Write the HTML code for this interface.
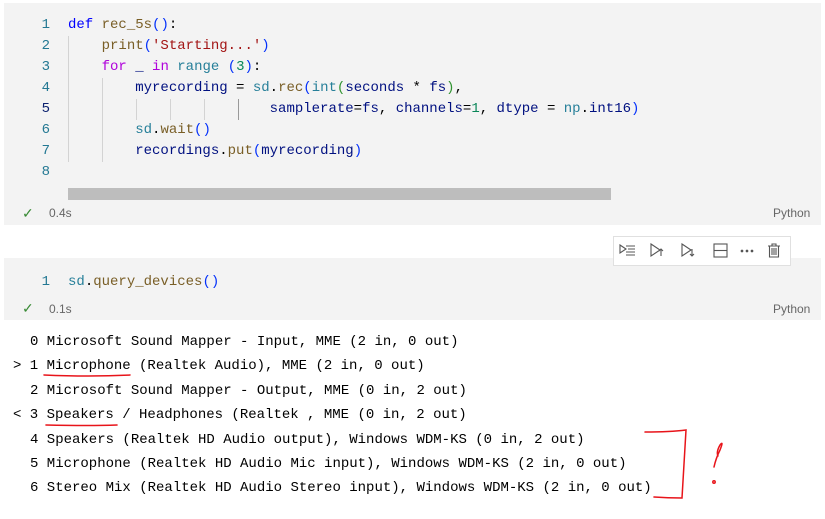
<!DOCTYPE html>
<html><head><style>
body{margin:0;width:825px;height:519px;background:#fff;position:relative;overflow:hidden;font-family:"Liberation Mono",monospace}
.cell{position:absolute;left:4px;width:817px;background:#f3f3f3}
.ln{position:absolute;left:30px;width:20px;text-align:right;color:#237893;font-size:14px}
.cd{position:absolute;left:68px;font-size:14px;color:#000;white-space:pre}
.k{color:#0000ff}.c{color:#af00db}.f{color:#795e26}.s{color:#a31515}.n{color:#098658}.v{color:#001080}.t{color:#267f99}
.p1{color:#0431fa}.p2{color:#319331}
.stat{position:absolute;font-family:"Liberation Sans",sans-serif;font-size:12px;color:#666}
.out{position:absolute;left:30px;font-size:14px;white-space:pre;color:#000}
.g{position:absolute;width:1px;background:#d3d3d3}
</style></head><body>
<div class="cell" style="top:3px;height:222px"></div>
<div class="ln" style="top:17px">1</div><div class="ln" style="top:38px">2</div><div class="ln" style="top:59px">3</div><div class="ln" style="top:80px">4</div><div class="ln" style="top:101px;color:#0b216f">5</div><div class="ln" style="top:122px">6</div><div class="ln" style="top:143px">7</div><div class="ln" style="top:164px">8</div>
<div class="g" style="left:68px;top:36px;height:126px"></div>
<div class="g" style="left:102px;top:78px;height:84px"></div>
<div class="g" style="left:136px;top:99px;height:21px"></div>
<div class="g" style="left:170px;top:99px;height:21px"></div>
<div class="g" style="left:204px;top:99px;height:21px"></div>
<div class="g" style="left:238px;top:99px;height:21px;background:#999"></div>
<div class="cd" style="top:17px"><span class="k">def</span> <span class="f">rec_5s</span><span class="p1">()</span>:</div>
<div class="cd" style="top:38px">    <span class="f">print</span><span class="p1">(</span><span class="s">'Starting...'</span><span class="p1">)</span></div>
<div class="cd" style="top:59px">    <span class="c">for</span> <span class="v">_</span> <span class="c">in</span> <span class="t">range</span> <span class="p1">(</span><span class="n">3</span><span class="p1">)</span>:</div>
<div class="cd" style="top:80px">        <span class="v">myrecording</span> = <span class="t">sd</span>.<span class="f">rec</span><span class="p1">(</span><span class="t">int</span><span class="p2">(</span><span class="v">seconds</span> * <span class="v">fs</span><span class="p2">)</span>,</div>
<div class="cd" style="top:101px">                        <span class="v">samplerate</span>=<span class="v">fs</span>, <span class="v">channels</span>=<span class="n">1</span>, <span class="v">dtype</span> = <span class="t">np</span>.<span class="v">int16</span><span class="p1">)</span></div>
<div class="cd" style="top:122px">        <span class="t">sd</span>.<span class="f">wait</span><span class="p1">()</span></div>
<div class="cd" style="top:143px">        <span class="v">recordings</span>.<span class="f">put</span><span class="p1">(</span><span class="v">myrecording</span><span class="p1">)</span></div>
<div style="position:absolute;left:68px;top:188px;width:543px;height:12px;background:#bdbdbd"></div>
<div class="stat" style="left:22px;top:205px;color:#388a34;font-size:14px">✓</div>
<div class="stat" style="left:49px;top:206px">0.4s</div>
<div class="stat" style="left:773px;top:206px">Python</div>

<div class="cell" style="top:258px;height:62px"></div>
<div class="ln" style="top:274px">1</div>
<div class="cd" style="top:274px"><span class="t">sd</span>.<span class="f">query_devices</span><span class="p1">()</span></div>
<div class="stat" style="left:22px;top:300px;color:#388a34;font-size:14px">✓</div>
<div class="stat" style="left:49px;top:302px">0.1s</div>
<div class="stat" style="left:773px;top:302px">Python</div>

<div style="position:absolute;left:613px;top:236px;width:178px;height:30px;background:#fff;border:1px solid #e0e0e0;box-sizing:border-box"></div>
<svg style="position:absolute;left:613px;top:236px" width="178" height="30" fill="none" stroke="#555" stroke-width="1.1">
<path d="M7 9l6 4-6 4z M13 10h9 M15 13h7 M13 16h9 M13 19h9"/>
<path d="M38 8l9 6-9 6z M48 13v7 M46 15l2-2 2 2"/>
<path d="M69 8l9 6-9 6z M79 13v7 M77 18l2 2 2-2"/>
<rect x="101" y="8" width="13" height="13"/><path d="M101 14.5h13"/>
<circle cx="129" cy="15" r=".8" fill="#555"/><circle cx="134" cy="15" r=".8" fill="#555"/><circle cx="139" cy="15" r=".8" fill="#555"/>
<path d="M155 10h12 M159 10v-2h4v2 M156.5 10v11h9v-11 M159 12v7 M161 12v7 M163 12v7"/>
</svg>

<div class="out" style="top:334px">0 Microsoft Sound Mapper - Input, MME (2 in, 0 out)</div>
<div class="out" style="top:358px;left:13px">&gt; 1 Microphone (Realtek Audio), MME (2 in, 0 out)</div>
<div class="out" style="top:383px">2 Microsoft Sound Mapper - Output, MME (0 in, 2 out)</div>
<div class="out" style="top:407px;left:13px">&lt; 3 Speakers / Headphones (Realtek , MME (0 in, 2 out)</div>
<div class="out" style="top:432px">4 Speakers (Realtek HD Audio output), Windows WDM-KS (0 in, 2 out)</div>
<div class="out" style="top:456px">5 Microphone (Realtek HD Audio Mic input), Windows WDM-KS (2 in, 0 out)</div>
<div class="out" style="top:480px">6 Stereo Mix (Realtek HD Audio Stereo input), Windows WDM-KS (2 in, 0 out)</div>
<svg style="position:absolute;left:0;top:0" width="825" height="519" fill="none" stroke="#e8141a" stroke-width="1.5" stroke-linecap="round">
<path d="M44 375 Q90 377 130 375"/>
<path d="M46 425 Q90 426 117 425"/>
<path d="M645 432 Q670 432 686 430 L682 498 Q668 498 654 497"/>
<path d="M714 467 Q716 458 720 450 Q724 440 720 445 Q716 452 718 456"/><circle cx="714" cy="482" r="1.2"/>
</svg>
</body></html>
